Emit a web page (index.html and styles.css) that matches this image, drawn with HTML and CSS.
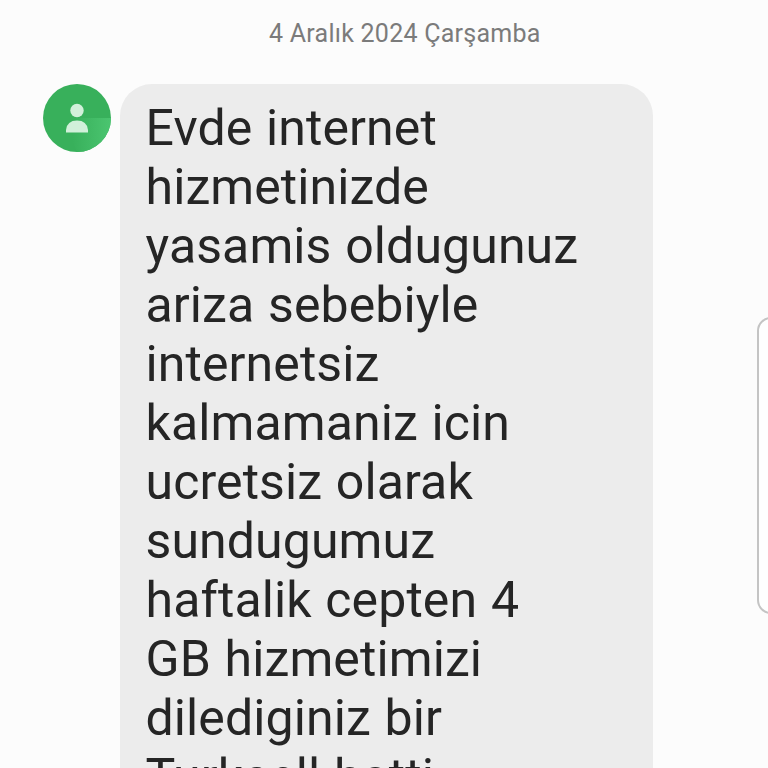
FILE: index.html
```html
<!DOCTYPE html>
<html lang="tr">
<head>
<meta charset="utf-8">
<title>Mesajlar</title>
<link rel="stylesheet" href="styles.css">
</head>
<body>
<div class="date">4 Aralık 2024 Çarşamba</div>
<main class="message">
<svg class="avatar" viewBox="0 0 68 68"><defs><linearGradient id="sheen" x1="0.2" y1="0" x2="1" y2="0"><stop offset="0" stop-color="#38b05b"/><stop offset="1" stop-color="#4bc570"/></linearGradient></defs><circle cx="34" cy="34" r="34" fill="#38b05b"/><path d="M20 34H68A34 34 0 0 1 34 68Z" fill="url(#sheen)"/><circle cx="34" cy="26.500" r="6.700" fill="#d2f0da"/><path d="M23 48.500V46Q24 36.500 34 36.500Q44 36.500 45 46V48.500Z" fill="#d2f0da"/></svg>
<p class="bubble">Evde internet<br>hizmetinizde<br>yasamis oldugunuz<br>ariza sebebiyle<br>internetsiz<br>kalmamaniz icin<br>ucretsiz olarak<br>sundugumuz<br>haftalik cepten 4<br>GB hizmetimizi<br>dilediginiz bir<br>Turkcell hatti</p>
</main>
<div class="edge-handle"></div>
</body>
</html>
```
FILE: styles.css
```css
* { box-sizing: border-box; }
html, body { height: 768px; overflow: hidden; }
body { margin: 0; background: #fcfcfc; font-family: Roboto, sans-serif; position: relative; display: flex; flex-direction: column; }
.date { flex: none; height: 84px; padding: 19px 0 0 269px; font-size: 25px; line-height: 30px; letter-spacing: 0.25px; color: #7b7b7b; white-space: nowrap; }
.message { flex: 1; min-height: 0; display: flex; align-items: stretch; gap: 9px; padding-left: 43px; overflow: hidden; }
.avatar { width: 68px; height: 68px; flex: none; }
.bubble { margin: 0; width: 533px; padding: 15px 25.500px; border-radius: 32px 32px 0 0; background: #ececec; color: #252525; font-size: 50px; line-height: 59px; letter-spacing: 0.1px; word-spacing: 1.200px; white-space: nowrap; }
.edge-handle { position: absolute; left: 757px; top: 317px; width: 40px; height: 297px; border: 2px solid #c4c4c4; border-radius: 14px; background: #fefefe; }
```
